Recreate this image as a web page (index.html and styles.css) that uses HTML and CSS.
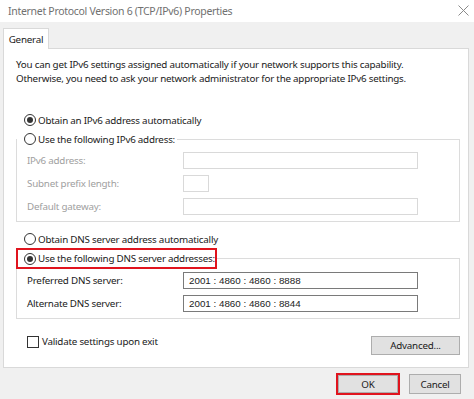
FILE: index.html
```html
<!DOCTYPE html>
<html>
<head>
<meta charset="utf-8">
<link rel="stylesheet" href="styles.css">
</head>
<body>
<div class="window">
  <div class="titlebar">
    <span class="title">Internet Protocol Version 6 (TCP/IPv6) Properties</span>
    <svg class="close" width="11" height="11" viewBox="0 0 11 11"><path d="M0.5 0.5 L10.5 10.5 M10.5 0.5 L0.5 10.5" stroke="#8a8a8a" stroke-width="1" fill="none"/></svg>
  </div>
  <div class="body">
    <div class="tabs"><div class="tab">General</div></div>
    <div class="panel">
      <p class="intro">You can get IPv6 settings assigned automatically if your network supports this capability.<br>Otherwise, you need to ask your network administrator for the appropriate IPv6 settings.</p>

      <div class="radio-row first"><span class="radio checked"></span><span>Obtain an IPv6 address automatically</span></div>
      <fieldset class="group">
        <legend class="legend"><span class="radio"></span><span>Use the following IPv6 address:</span></legend>
        <div class="field"><span class="label disabled">IPv6 address:</span><span class="input wide"></span></div>
        <div class="field"><span class="label disabled">Subnet prefix length:</span><span class="input narrow"></span></div>
        <div class="field"><span class="label disabled">Default gateway:</span><span class="input wide"></span></div>
      </fieldset>

      <div class="radio-row second"><span class="radio"></span><span>Obtain DNS server address automatically</span></div>
      <fieldset class="group">
        <legend class="legend highlight"><span class="radio checked"></span><span>Use the following DNS server addresses:</span></legend>
        <div class="field"><span class="label">Preferred DNS server:</span><span class="input wide enabled">2001 : 4860 : 4860 : 8888</span></div>
        <div class="field"><span class="label">Alternate DNS server:</span><span class="input wide enabled">2001 : 4860 : 4860 : 8844</span></div>
      </fieldset>

      <div class="bottom-row">
        <div class="check-row"><span class="checkbox"></span><span>Validate settings upon exit</span></div>
        <div class="button advanced">Advanced...</div>
      </div>
    </div>
    <div class="footer">
      <div class="ok-frame"><div class="button ok">OK</div></div>
      <div class="button cancel">Cancel</div>
    </div>
  </div>
</div>
</body>
</html>
```
FILE: styles.css
```css
html, body {
  margin: 0;
  padding: 0;
}
body {
  width: 474px;
  height: 399px;
  background: #f0f0f0;
  font-family: "Noto Sans", "Open Sans", sans-serif;
  font-size: 9.8px;
  letter-spacing: -0.22px;
  color: #1a1a1a;
  overflow: hidden;
}
.window {
  width: 474px;
  height: 399px;
}
.titlebar {
  height: 22px;
  background: #ffffff;
  display: flex;
  align-items: center;
  justify-content: space-between;
  padding: 0 5px 0 8px;
  box-sizing: border-box;
}
.title {
  font-size: 10.5px;
  letter-spacing: -0.3px;
  color: #707070;
}
.close {
  display: block;
  margin-top: -1px;
}
.body {
  padding: 6px 0 0 3px;
}
.tabs {
  display: flex;
  height: 20px;
}
.tab {
  width: 46px;
  height: 21px;
  box-sizing: border-box;
  border: 1px solid #d9d9d9;
  border-bottom: none;
  background: #ffffff;
  display: flex;
  align-items: center;
  justify-content: center;
  position: relative;
  z-index: 1;
}
.panel {
  width: 466px;
  height: 320px;
  box-sizing: border-box;
  background: #ffffff;
  border: 1px solid #d9d9d9;
  padding: 0 8px 0 12px;
}
.intro {
  margin: 9px 0 0 0;
  line-height: 14px;
}
.radio-row, .legend, .check-row {
  display: flex;
  align-items: center;
  height: 18px;
}
.radio-row.first {
  margin-top: 25px;
  padding-left: 8px;
}
.radio-row.second {
  margin-top: 8px;
  padding-left: 8px;
}
.radio {
  width: 12px;
  height: 12px;
  box-sizing: border-box;
  border: 1px solid #333333;
  border-radius: 50%;
  background: #ffffff;
  margin-right: 2px;
  display: flex;
  align-items: center;
  justify-content: center;
}
.radio.checked::after {
  content: "";
  width: 6px;
  height: 6px;
  border-radius: 50%;
  background: #333333;
}
.group {
  margin: 1px 0 0 0;
  padding: 0 0 6px 10px;
  border: 1px solid #dcdcdc;
  min-width: 0;
}
.legend {
  padding: 0 2px 0 7px;
  margin-left: -10px;
  box-sizing: border-box;
}
.legend.highlight {
  outline: 2px solid #e0141e;
  outline-offset: -1px;
  height: 19px;
  padding-right: 1px;
}
.field {
  display: flex;
  align-items: center;
  height: 17px;
  margin-top: 6px;
}
.group .legend + .field {
  margin-top: 4px;
}
.label {
  width: 156px;
}
.disabled {
  color: #a0a0a0;
}
.input {
  height: 17px;
  box-sizing: border-box;
  border: 1px solid #d9d9d9;
  background: #ffffff;
}
.input.wide {
  width: 235px;
}
.input.narrow {
  width: 26px;
}
.input.enabled {
  border-color: #7a7a7a;
  font-family: "Liberation Sans", Arial, sans-serif;
  font-size: 9.8px;
  letter-spacing: 0;
  padding-left: 5px;
  display: flex;
  align-items: center;
  color: #222222;
}
.bottom-row {
  display: flex;
  justify-content: space-between;
  align-items: flex-start;
  margin-top: 17px;
}
.check-row {
  height: 11px;
  padding-left: 11px;
}
.checkbox {
  width: 12px;
  height: 12px;
  box-sizing: border-box;
  border: 1px solid #333333;
  background: #ffffff;
  margin-right: 3px;
}
.button {
  height: 19px;
  box-sizing: border-box;
  border: 1px solid #adadad;
  background: #e1e1e1;
  display: flex;
  align-items: center;
  justify-content: center;
}
.advanced {
  width: 89px;
}
.footer {
  display: flex;
  justify-content: flex-end;
  align-items: center;
  width: 458px;
  margin-top: 5px;
  gap: 9px;
}
.ok-frame {
  border: 2px solid #e0141e;
}
.ok {
  width: 60px;
  height: 18px;
}
.cancel {
  width: 52px;
  height: 20px;
}
```
